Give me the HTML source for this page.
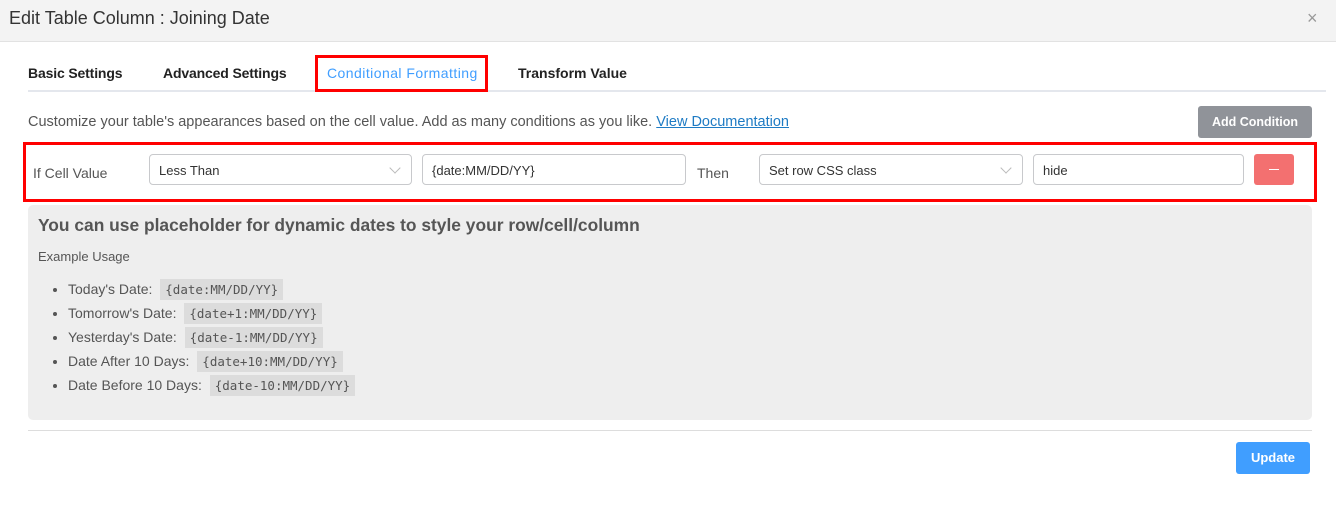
<!DOCTYPE html>
<html><head><style>
*{margin:0;padding:0;box-sizing:border-box}
body{width:1336px;height:508px;background:#fff;font-family:"Liberation Sans",sans-serif;color:#303133;position:relative;overflow:hidden}
.a{position:absolute;white-space:nowrap}
.hdr{left:0;top:0;width:1336px;height:42px;background:#f3f3f3;border-bottom:1px solid #e2e2e2}
.tab{top:65px;font-size:14px;font-weight:bold;color:#222}
.box{border:1px solid #c8c9cc;border-radius:4px;height:31px;font-size:13px;padding:8px 9px;color:#333}
.chev{position:absolute;right:12px;top:9px;width:8px;height:8px;border-right:1px solid #bbb;border-bottom:1px solid #bbb;transform:rotate(45deg)}
code{font-family:"DejaVu Sans Mono","Liberation Mono",monospace;font-size:12.5px;background:#dcdcdc;padding:3px 5px;color:#555;margin-left:4px}
li{height:24px;line-height:24px;font-size:14px;color:#555}
</style></head><body>
<div class="a hdr"></div>
<div class="a" style="left:9px;top:8px;font-size:18px;color:#333">Edit Table Column : Joining Date</div>
<div class="a" style="left:1307px;top:8px;font-size:18px;color:#999">×</div>
<div class="a tab" style="left:28px;letter-spacing:-0.15px">Basic Settings</div>
<div class="a tab" style="left:163px;letter-spacing:-0.15px">Advanced Settings</div>
<div class="a tab" style="left:327px;color:#409eff;font-weight:normal;letter-spacing:0.45px">Conditional Formatting</div>
<div class="a tab" style="left:518px">Transform Value</div>
<div class="a" style="left:28px;top:90px;width:1298px;height:2px;background:#e4e7ed"></div>
<div class="a" style="left:315px;top:55px;width:173px;height:37px;border:3px solid #f00"></div>
<div class="a" style="left:28px;top:114px;font-size:14.5px;color:#555">Customize your table's appearances based on the cell value. Add as many conditions as you like. <span style="color:#1e7bc4;text-decoration:underline">View Documentation</span></div>
<div class="a" style="left:1198px;top:106px;width:114px;height:32px;background:#909399;border-radius:3px;color:#fff;font-size:12.5px;font-weight:bold;text-align:center;line-height:32px">Add Condition</div>
<div class="a" style="left:23px;top:142px;width:1294px;height:60px;border:3px solid #f00"></div>
<div class="a" style="left:33px;top:165px;font-size:14px;color:#555">If Cell Value</div>
<div class="a box" style="left:149px;top:154px;width:263px">Less Than<span class="chev"></span></div>
<div class="a box" style="left:422px;top:154px;width:264px">{date:MM/DD/YY}</div>
<div class="a" style="left:697px;top:165px;font-size:14px;color:#555">Then</div>
<div class="a box" style="left:759px;top:154px;width:264px">Set row CSS class<span class="chev"></span></div>
<div class="a box" style="left:1033px;top:154px;width:211px">hide</div>
<div class="a" style="left:1254px;top:154px;width:40px;height:31px;background:#f37070;border-radius:3px"><div style="position:absolute;left:15px;top:15px;width:10px;height:1px;background:#fff"></div></div>
<div class="a" style="left:28px;top:205px;width:1284px;height:215px;background:#eee;border-radius:5px"></div>
<div class="a" style="left:38px;top:215px;font-size:17.4px;font-weight:bold;color:#555">You can use placeholder for dynamic dates to style your row/cell/column</div>
<div class="a" style="left:38px;top:249px;font-size:13px;color:#555">Example Usage</div>
<ul class="a" style="left:68px;top:277px;list-style:disc">
<li>Today's Date: <code>{date:MM/DD/YY}</code></li>
<li>Tomorrow's Date: <code>{date+1:MM/DD/YY}</code></li>
<li>Yesterday's Date: <code>{date-1:MM/DD/YY}</code></li>
<li>Date After 10 Days: <code>{date+10:MM/DD/YY}</code></li>
<li>Date Before 10 Days: <code>{date-10:MM/DD/YY}</code></li>
</ul>
<div class="a" style="left:28px;top:430px;width:1284px;height:1px;background:#ddd"></div>
<div class="a" style="left:1236px;top:442px;width:74px;height:32px;background:#409eff;border-radius:3px;color:#fff;font-size:13px;font-weight:bold;text-align:center;line-height:32px">Update</div>
</body></html>
